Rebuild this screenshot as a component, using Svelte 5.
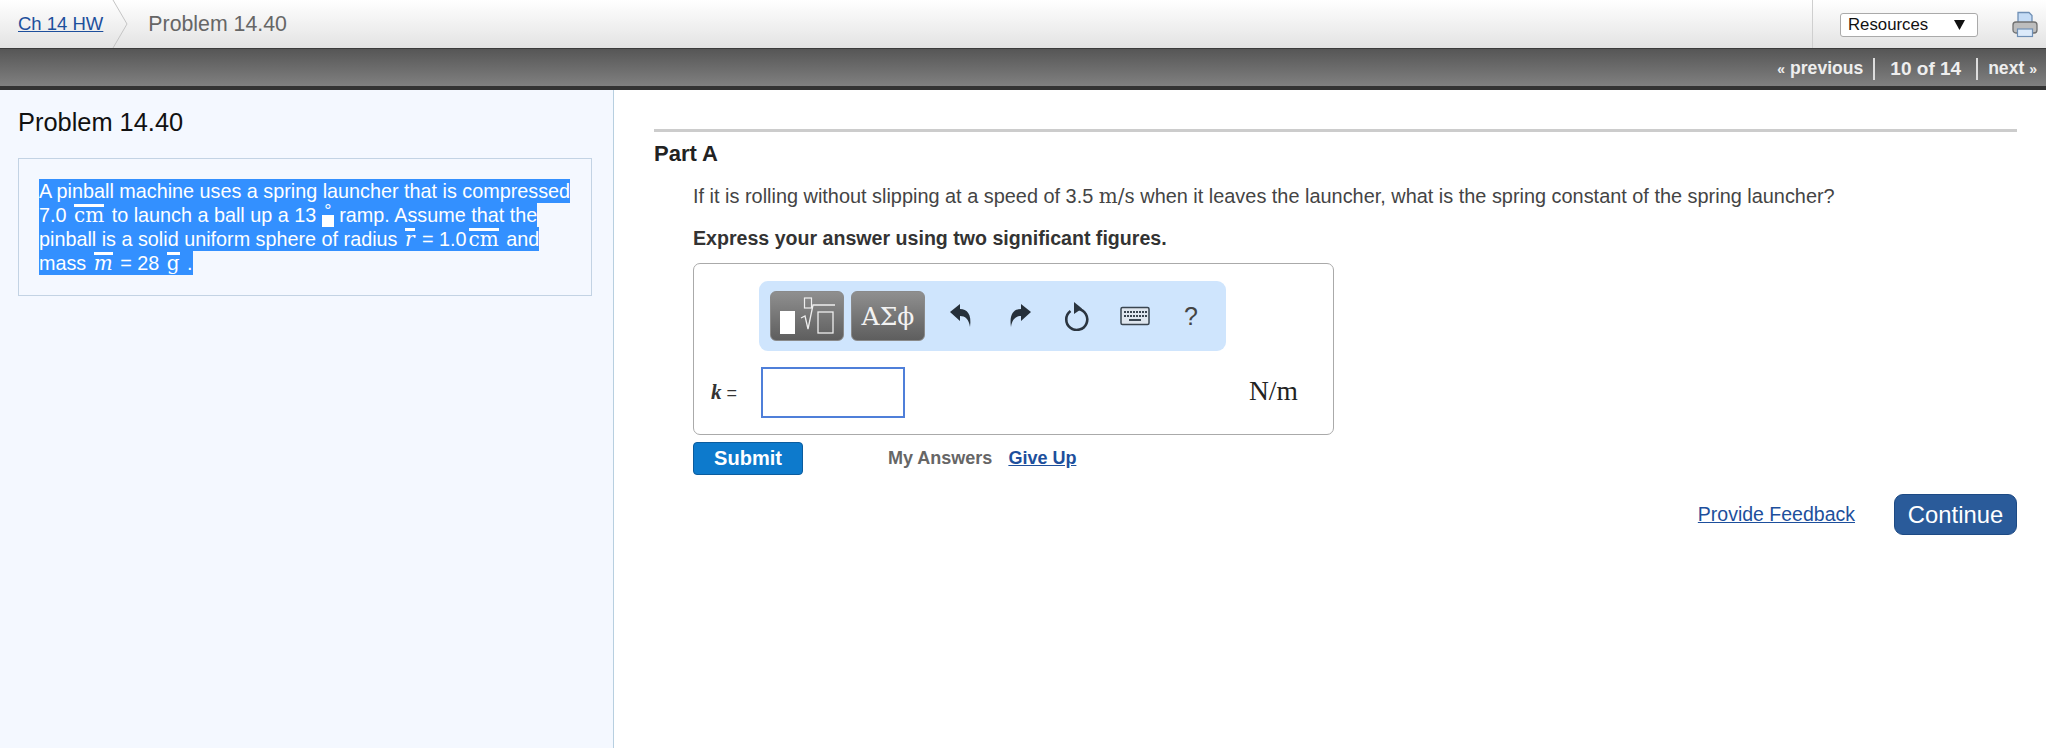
<!-- Mastering-style problem page: breadcrumb bar, pager, statement panel and answer form -->
<script>
  const keys = [0, 1, 2, 3, 4, 5, 6, 7];
</script>

<div class="page">
  <header class="crumbs">
    <a class="crumb-link" href="#hw">Ch 14 HW</a>
    <svg class="chevron" width="20" height="48" viewBox="0 0 20 48">
      <path d="M1 0 L15 24 L1 48" fill="none" stroke="#c4c4c4" stroke-width="1" />
    </svg>
    <span class="crumb-current">Problem 14.40</span>
    <div class="tools">
      <div class="select">
        <span>Resources</span>
        <svg width="11" height="10" viewBox="0 0 11 10"><path d="M0 0 H11 L5.5 10 Z" fill="#111" /></svg>
      </div>
      <svg class="printer" width="26" height="27" viewBox="0 0 26 27">
        <path d="M6 11 V1.5 H17 L20 4.5 V11" fill="#c5dcf6" stroke="#6f8fb5" stroke-width="1.3" />
        <rect x="1" y="11" width="24" height="11" rx="3" fill="#bdbdbd" stroke="#707070" stroke-width="1.3" />
        <rect x="5.5" y="18" width="15" height="7.5" fill="#dceafa" stroke="#6f8fb5" stroke-width="1.2" />
      </svg>
    </div>
  </header>

  <nav class="pager">
    <a href="#prev"><small>«</small> previous</a>
    <i></i>
    <span>10 of 14</span>
    <i></i>
    <a href="#next">next <small>»</small></a>
  </nav>

  <div class="body">
    <aside class="statement">
      <h1>Problem 14.40</h1>
      <div class="statement-box">
        <p class="sel">A pinball machine uses a spring launcher that is compressed</p>
        <p class="sel">7.0 <span class="m over">cm</span> to launch a ball up a 13 <span class="deg">°</span> ramp. Assume that the</p>
        <p class="sel">pinball is a solid uniform sphere of radius <em class="m over">r</em> = 1.0<span class="m over">cm</span> and</p>
        <p class="sel">mass <em class="m over">m</em> = 28 <span class="m over">g</span> .</p>
      </div>
    </aside>

    <main class="content">
      <h2>Part A</h2>
      <div class="part">
        <p class="question">If it is rolling without slipping at a speed of 3.5 <span class="unit-inline">m/s</span> when it leaves the launcher, what is the spring constant of the spring launcher?</p>
        <p class="instruction">Express your answer using two significant figures.</p>

        <div class="answer">
          <div class="toolbar">
            <button class="tpl" aria-label="Templates">
              <svg width="60" height="38" viewBox="0 0 60 38">
                <rect x="3" y="14" width="15" height="23" fill="#fff" />
                <rect x="27.5" y="1" width="7" height="10" fill="none" stroke="#eee" stroke-width="1.2" />
                <path d="M24 21 L28 19 L31 32 L36 8 H58" fill="none" stroke="#eee" stroke-width="1.3" />
                <rect x="41" y="15" width="15" height="21" fill="none" stroke="#eee" stroke-width="1.3" />
              </svg>
            </button>
            <button class="tpl greek">ΑΣϕ</button>
            <svg class="ico undo" width="24" height="26" viewBox="0 0 24 26">
              <path d="M1 9 L11 1 V6 C18 6 23 11 21 24 C20 16 16 13 11 13 V18 Z" fill="#26303a" />
            </svg>
            <svg class="ico redo" width="24" height="26" viewBox="0 0 24 26">
              <path d="M23 9 L13 1 V6 C6 6 1 11 3 24 C4 16 8 13 13 13 V18 Z" fill="#26303a" />
            </svg>
            <svg class="ico reset" width="26" height="30" viewBox="0 0 26 30">
              <path d="M6.5 10 A10.5 10.5 0 1 0 14 8" fill="none" stroke="#2b3540" stroke-width="2.6" />
              <path d="M10 1 L18 7.5 L10 13 Z" fill="#2b3540" />
            </svg>
            <svg class="ico kbd" width="30" height="20" viewBox="0 0 30 20">
              <rect x="1" y="1.5" width="28" height="17" rx="1.5" fill="#dfe6ee" stroke="#3a4550" stroke-width="1.5" />
              {#each keys as k}
                <rect x={4 + k * 3} y="5" width="2" height="2" fill="#3a4550" />
                <rect x={4 + k * 3} y="9" width="2" height="2" fill="#3a4550" />
              {/each}
              <rect x="9" y="13" width="12" height="2" fill="#3a4550" />
            </svg>
            <span class="help">?</span>
          </div>
          <div class="entry">
            <span class="label"><em>k</em> =</span>
            <div class="input"></div>
            <span class="unit">N/m</span>
          </div>
        </div>

        <div class="actions">
          <button class="submit">Submit</button>
          <span class="my-answers">My Answers</span>
          <a class="give-up" href="#giveup">Give Up</a>
        </div>
      </div>

      <div class="footer">
        <a class="feedback" href="#feedback">Provide Feedback</a>
        <button class="continue">Continue</button>
      </div>
    </main>
  </div>
</div>

<style>
  :global(body) {
    margin: 0;
    background: #fff;
  }

  .page {
    width: 2046px;
    height: 748px;
    overflow: hidden;
    display: flex;
    flex-direction: column;
    font-family: "Liberation Sans", Arial, sans-serif;
  }

  .crumbs {
    height: 48px;
    box-sizing: border-box;
    flex: none;
    display: flex;
    align-items: center;
    padding-left: 18px;
    background: linear-gradient(#ffffff, #e3e3e3);
  }

  .crumb-link {
    font-size: 18.5px;
    color: #1d4f9c;
    text-decoration: underline;
  }

  .chevron {
    margin-left: 9px;
  }

  .crumb-current {
    margin-left: 16px;
    font-size: 21.3px;
    color: #666;
  }

  .tools {
    margin-left: auto;
    height: 100%;
    width: 234px;
    box-sizing: border-box;
    border-left: 1px solid #cfcfcf;
    display: flex;
    align-items: center;
    padding-left: 27px;
  }

  .select {
    width: 138px;
    height: 24px;
    margin-top: 2px;
    box-sizing: border-box;
    border: 1px solid #aaa;
    border-radius: 3px;
    background: #fff;
    display: flex;
    align-items: center;
    justify-content: space-between;
    padding: 0 12px 0 7px;
    font-size: 16.8px;
    color: #111;
  }

  .printer {
    margin-left: 34px;
  }

  .pager {
    height: 42px;
    flex: none;
    box-sizing: border-box;
    background: linear-gradient(#565656, #808080);
    border-top: 1px solid #3c3c3c;
    border-bottom: 4px solid #333;
    display: flex;
    align-items: center;
    justify-content: flex-end;
    padding: 2px 9px 0 0;
    font-size: 19px;
    font-weight: bold;
    color: #eee;
  }

  .pager a {
    font-size: 17.6px;
    color: #eee;
    text-decoration: none;
  }

  .pager small {
    font-size: 14px;
  }

  .pager i {
    width: 2px;
    height: 22px;
    background: #ddd;
  }

  .pager a:first-child {
    margin-right: 10px;
  }

  .pager span {
    margin: 0 15px;
  }

  .pager a:last-child {
    margin-left: 10px;
  }

  .body {
    flex: 1;
    display: flex;
    min-height: 0;
  }

  .statement {
    width: 614px;
    flex: none;
    box-sizing: border-box;
    padding: 17px 21px 0 18px;
    background: #f4f8ff;
    border-right: 1px solid #b7cfe0;
  }

  h1 {
    margin: 0;
    font-size: 25.4px;
    font-weight: normal;
    line-height: 30px;
    color: #111;
  }

  .statement-box {
    margin-top: 21px;
    height: 138px;
    box-sizing: border-box;
    border: 1px solid #c3d3e4;
    padding: 20px 20px 0 20px;
  }

  .sel {
    margin: 0;
    width: fit-content;
    height: 24px;
    background: #3390ff;
    color: #fff;
    font-size: 19.8px;
    line-height: 24px;
    white-space: nowrap;
  }

  .m {
    font-family: "DejaVu Serif", serif;
    font-size: 20px;
    margin: 0 2px;
  }

  .over {
    display: inline-block;
    line-height: 17px;
    border-top: 3px solid #fff;
  }

  .deg {
    display: inline-block;
    width: 12px;
    height: 24px;
    vertical-align: top;
    text-align: center;
    font-size: 18px;
    line-height: 16px;
    background: linear-gradient(#3390ff 50%, #fff 50%);
  }

  .content {
    flex: 1;
    box-sizing: border-box;
    padding: 39px 29px 0 40px;
    min-width: 0;
  }

  h2 {
    margin: 0;
    padding-top: 10px;
    border-top: 3px solid #ccc;
    font-size: 22px;
    line-height: 24px;
    color: #222;
  }

  .part {
    padding: 0 0 0 39px;
  }

  .question {
    margin: 18px 0 0;
    font-size: 19.9px;
    line-height: 24px;
    color: #444;
    white-space: nowrap;
  }

  .unit-inline {
    font-family: "DejaVu Serif", serif;
    font-size: 20px;
  }

  .instruction {
    margin: 18px 0 0;
    font-size: 19.6px;
    line-height: 24px;
    font-weight: bold;
    color: #333;
  }

  .answer {
    margin-top: 13px;
    width: 641px;
    height: 172px;
    box-sizing: border-box;
    border: 1px solid #aaa;
    border-radius: 7px;
    padding: 17px 0 0 17px;
  }

  .toolbar {
    margin-left: 48px;
    width: 467px;
    height: 70px;
    box-sizing: border-box;
    background: #cfe5fd;
    border-radius: 9px;
    display: flex;
    align-items: center;
    padding-left: 11px;
  }

  .tpl {
    width: 74px;
    height: 50px;
    margin-right: 7px;
    padding: 0;
    border: 1px solid #8a8a8a;
    border-radius: 6px;
    background: linear-gradient(#8f8f8f, #5e5e5e);
    color: #f2f2f2;
    display: flex;
    align-items: center;
    justify-content: center;
  }

  .greek {
    font-family: "DejaVu Serif", serif;
    font-size: 25px;
  }

  .ico {
    flex: none;
  }

  .undo {
    margin-left: 17px;
  }

  .redo {
    margin-left: 35px;
  }

  .reset {
    margin-left: 32px;
  }

  .kbd {
    margin-left: 30px;
  }

  .help {
    margin-left: 34px;
    font-size: 25px;
    color: #444;
  }

  .entry {
    margin-top: 16px;
    display: flex;
    align-items: center;
    height: 51px;
  }

  .label {
    width: 50px;
    font-size: 18px;
    color: #333;
  }

  .label em {
    font-family: "Liberation Serif", serif;
    font-size: 21px;
    font-weight: bold;
  }

  .input {
    width: 144px;
    height: 51px;
    box-sizing: border-box;
    border: 2px solid #4f7fd9;
    background: #fff;
  }

  .unit {
    margin-left: 344px;
    padding-bottom: 4px;
    font-family: "Liberation Serif", serif;
    font-size: 27.5px;
    color: #222;
  }

  .actions {
    margin-top: 7px;
    display: flex;
    align-items: center;
  }

  .submit {
    width: 110px;
    height: 33px;
    padding: 0;
    border: 1px solid #0b5c9e;
    border-radius: 4px;
    background: #0d7acc;
    color: #fff;
    font-family: inherit;
    font-size: 20px;
    font-weight: bold;
  }

  .my-answers {
    margin-left: 85px;
    font-size: 18px;
    font-weight: bold;
    color: #666;
  }

  .give-up {
    margin-left: 16px;
    font-size: 18px;
    font-weight: bold;
    color: #1d4f9c;
  }

  .footer {
    margin-top: 19px;
    display: flex;
    justify-content: flex-end;
    align-items: center;
  }

  .feedback {
    font-size: 19.5px;
    color: #1d4f9c;
  }

  .continue {
    margin-left: 39px;
    width: 123px;
    height: 41px;
    padding: 0;
    border: 1px solid #1d4a84;
    border-radius: 9px;
    background: #2a5b9a;
    color: #fff;
    font-family: inherit;
    font-size: 23.8px;
  }
</style>
